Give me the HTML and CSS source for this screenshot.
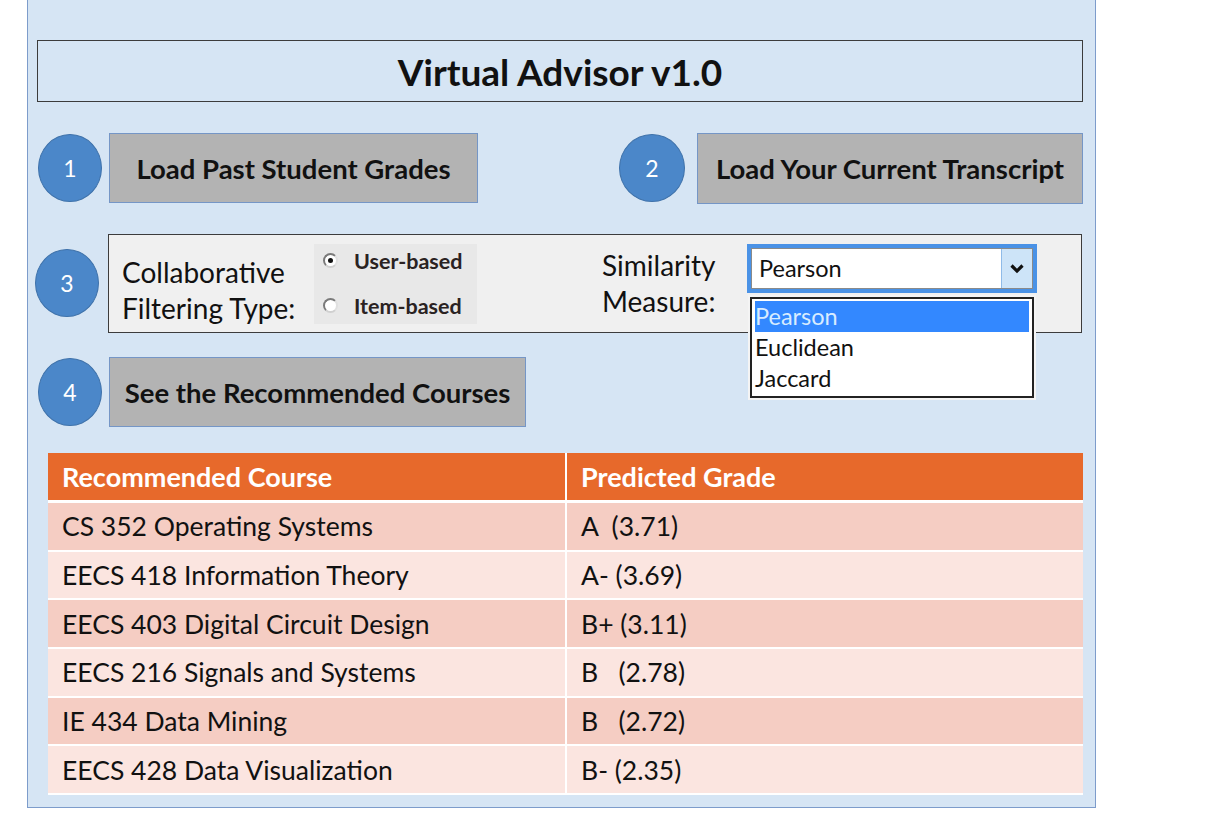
FILE: index.html
```html
<!DOCTYPE html>
<html>
<head>
<meta charset="utf-8">
<link rel="stylesheet" href="styles.css">
</head>
<body>
<div class="panel">
  <div class="title">Virtual Advisor v1.0</div>

  <div class="row row1">
    <div class="step">
      <div class="num">1</div>
      <div class="btn btn1">Load Past Student Grades</div>
    </div>
    <div class="step step2">
      <div class="num num2">2</div>
      <div class="btn btn2">Load Your Current Transcript</div>
    </div>
  </div>

  <div class="row row3">
    <div class="num num3">3</div>
    <div class="options">
      <div class="label cf-label">Collaborative<br>Filtering Type:</div>
      <div class="radios">
        <div class="radio-item"><span class="radio checked"></span>User-based</div>
        <div class="radio-item"><span class="radio"></span>Item-based</div>
      </div>
      <div class="label sim-label">Similarity<br>Measure:</div>
      <div class="select">
        <div class="select-field">
          <span class="select-value">Pearson</span>
          <span class="select-btn"><svg width="16" height="11" viewBox="0 0 16 11"><path d="M2.5 2.5 L8 8 L13.5 2.5" fill="none" stroke="#111" stroke-width="3.2"/></svg></span>
        </div>
        <div class="dropdown">
          <div class="opt selected">Pearson</div>
          <div class="opt">Euclidean</div>
          <div class="opt">Jaccard</div>
        </div>
      </div>
    </div>
  </div>

  <div class="row row4">
    <div class="num">4</div>
    <div class="btn btn4">See the Recommended Courses</div>
  </div>

  <table class="results">
    <thead>
      <tr><th class="c1">Recommended Course</th><th>Predicted Grade</th></tr>
    </thead>
    <tbody>
      <tr class="odd"><td class="c1">CS 352 Operating Systems</td><td>A&nbsp; (3.71)</td></tr>
      <tr class="even"><td class="c1">EECS 418 Information Theory</td><td>A- (3.69)</td></tr>
      <tr class="odd"><td class="c1">EECS 403 Digital Circuit Design</td><td>B+ (3.11)</td></tr>
      <tr class="even"><td class="c1">EECS 216 Signals and Systems</td><td>B&nbsp;&nbsp; (2.78)</td></tr>
      <tr class="odd"><td class="c1">IE 434 Data Mining</td><td>B&nbsp;&nbsp; (2.72)</td></tr>
      <tr class="even"><td class="c1">EECS 428 Data Visualization</td><td>B- (2.35)</td></tr>
    </tbody>
  </table>
</div>
</body>
</html>
```

FILE: styles.css
```css
html, body {
  margin: 0;
  padding: 0;
  background: #ffffff;
}

body {
  font-family: Lato, "Open Sans", sans-serif;
  color: #111;
}

.panel {
  box-sizing: border-box;
  margin-left: 27px;
  width: 1069px;
  height: 808px;
  background: #d6e5f4;
  border: 1.5px solid #7d9ccb;
  border-top: none;
  padding: 40px 12px 0 9px;
}

.title {
  box-sizing: border-box;
  height: 62px;
  border: 1.5px solid #3c3c3c;
  display: flex;
  align-items: center;
  justify-content: center;
  font-weight: bold;
  font-size: 37px;
  color: #111;
}

.row {
  display: flex;
  align-items: center;
}

.row1 {
  margin-top: 30px;
  height: 72px;
  justify-content: space-between;
}

.step {
  display: flex;
  align-items: center;
  gap: 7px;
}

.step2 {
  gap: 12px;
}

.num {
  box-sizing: border-box;
  width: 64px;
  height: 68px;
  border-radius: 50%;
  background: #4b87c9;
  border: 1px solid #3f72aa;
  color: #fff;
  font-size: 23px;
  display: flex;
  align-items: center;
  justify-content: center;
  margin-left: 1px;
  flex: none;
}

.num2 {
  width: 66px;
}

.btn {
  box-sizing: border-box;
  background: #b3b3b3;
  border: 1.5px solid #7596c6;
  display: flex;
  align-items: center;
  justify-content: center;
  font-weight: bold;
  font-size: 27.5px;
  color: #111;
}

.btn1 {
  width: 369px;
  height: 70px;
}

.btn2 {
  width: 386px;
  height: 71px;
}

.row3 {
  margin-top: 30px;
  gap: 9px;
}

.num3 {
  margin-left: -2px;
  margin-top: -1px;
}

.options {
  box-sizing: border-box;
  width: 974px;
  height: 99px;
  background: #f0f0f0;
  border: 1.5px solid #3c3c3c;
  display: flex;
  align-items: center;
  padding-left: 13px;
}

.label {
  font-size: 28px;
  line-height: 36px;
  color: #111;
}

.cf-label {
  width: 192px;
  margin-top: 12px;
}

.radios {
  box-sizing: border-box;
  width: 163px;
  height: 80px;
  background: #e8e8e8;
  display: flex;
  flex-direction: column;
  justify-content: space-between;
  padding: 2px 0 3px 9px;
}

.radio-item {
  display: flex;
  align-items: center;
  gap: 16px;
  font-size: 21.5px;
  font-weight: bold;
  color: #2a2222;
  height: 30px;
}

.radio {
  box-sizing: border-box;
  width: 15px;
  height: 15px;
  border-radius: 50%;
  background: #fff;
  border: 2px solid #7a7a7a;
  border-right-color: #e0e0e0;
  border-bottom-color: #d0d0d0;
  position: relative;
  flex: none;
}

.radio.checked::after {
  content: "";
  position: absolute;
  left: 3px;
  top: 3px;
  width: 5px;
  height: 5px;
  border-radius: 50%;
  background: #111;
}

.sim-label {
  margin-left: 125px;
  width: 145px;
  margin-top: -2px;
}

.select {
  position: relative;
  width: 290px;
  height: 49px;
  align-self: flex-start;
  margin-top: 8.5px;
}

.select-field {
  box-sizing: border-box;
  width: 100%;
  height: 100%;
  border: 4px solid #4a92e6;
  background: #fff;
  display: flex;
  align-items: stretch;
  box-shadow: inset 0 0 0 1px #8a8a8a;
  padding: 1px;
}

.select-value {
  flex: 1;
  display: flex;
  align-items: center;
  padding-left: 7px;
  font-size: 23.5px;
  color: #111;
}

.select-btn {
  width: 30px;
  background: #cde4f8;
  border-left: 1px solid #8fbbe8;
  display: flex;
  align-items: center;
  justify-content: center;
}

.dropdown {
  position: absolute;
  left: 3px;
  top: 53px;
  box-sizing: border-box;
  width: 284px;
  height: 101px;
  background: #fff;
  border: 2px solid #222;
  padding: 2px 3px;
  box-shadow: 0 0 0 2px #f4f4f4;
  z-index: 2;
}

.opt {
  font-size: 23.5px;
  height: 31px;
  line-height: 30px;
  padding-left: 0;
  color: #111;
}

.opt.selected {
  background: #3388ff;
  color: #d8ecff;
}

.row4 {
  margin-top: 24px;
  height: 70px;
  gap: 7px;
}

.btn4 {
  width: 417px;
  height: 70px;
}

.results {
  margin-top: 26px;
  margin-left: 11px;
  width: 1035px;
  border-collapse: separate;
  border-spacing: 0;
}

.results th,
.results td {
  text-align: left;
  padding: 0 0 0 14px;
}

.results th {
  background: #e7692b;
  color: #fff;
  font-weight: bold;
  font-size: 27px;
  height: 47px;
  border-bottom: 3px solid #fff;
}

.results td {
  font-size: 26.5px;
  height: 46.7px;
  border-bottom: 2px solid #fff;
  color: #111;
}

.results .c1 {
  width: 503px;
  border-right: 2px solid #fff;
}

.results tr.odd td {
  background: #f5cdc3;
}

.results tr.even td {
  background: #fbe5e0;
}
```
